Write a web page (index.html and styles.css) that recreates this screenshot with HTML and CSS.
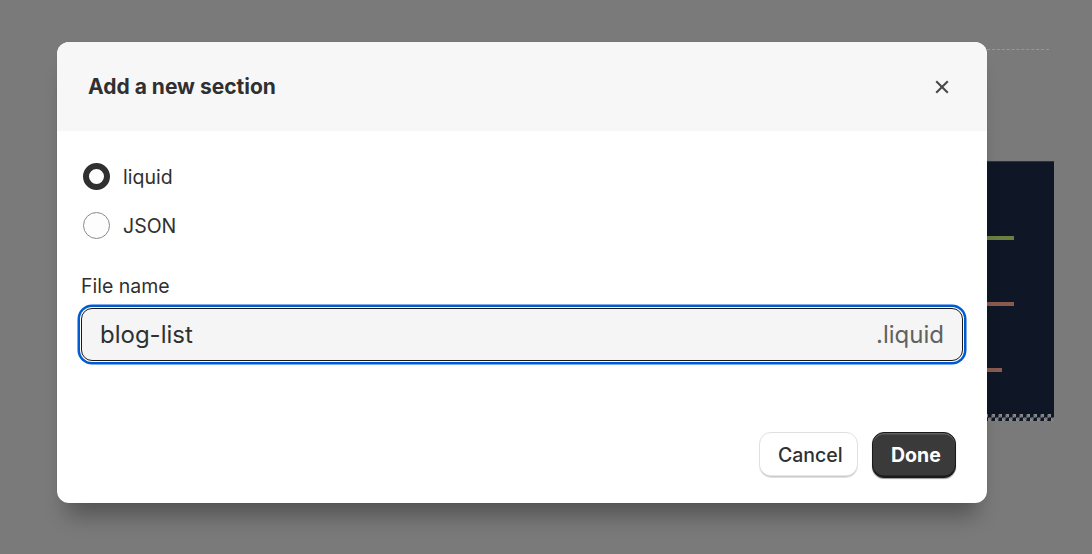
FILE: index.html
```html
<!DOCTYPE html>
<html lang="en">
<head>
<meta charset="utf-8">
<title>Add a new section</title>
<link rel="stylesheet" href="styles.css">
</head>
<body>
<div class="backdrop">
  <div class="dash-line"></div>
  <div class="code-panel">
    <div class="code-line green" style="top:74px;width:27px"></div>
    <div class="code-line red" style="top:140px;width:27px"></div>
    <div class="code-line red" style="top:206px;width:15px"></div>
    <div class="checker"></div>
  </div>
</div>
<div class="overlay">
  <div class="modal">
    <div class="modal-header">
      <h2 class="modal-title">Add a new section</h2>
      <button class="close-btn" aria-label="Close">
        <svg width="14" height="14" viewBox="0 0 14 14"><path d="M1.2 1.2 L12.8 12.8 M12.8 1.2 L1.2 12.8" stroke="#4a4a4a" stroke-width="2.1" stroke-linecap="butt"/></svg>
      </button>
    </div>
    <div class="modal-body">
      <label class="radio-row"><span class="radio checked"></span><span class="radio-label">liquid</span></label>
      <label class="radio-row"><span class="radio"></span><span class="radio-label">JSON</span></label>
      <div class="field-label">File name</div>
      <div class="text-input">
        <span class="input-value">blog-list</span>
        <span class="input-suffix">.liquid</span>
      </div>
    </div>
    <div class="modal-footer">
      <button class="btn btn-secondary">Cancel</button>
      <button class="btn btn-primary">Done</button>
    </div>
  </div>
</div>
</body>
</html>
```
FILE: styles.css
```css
* { box-sizing: border-box; }
html, body { margin: 0; padding: 0; }
body {
  width: 1092px;
  height: 554px;
  overflow: hidden;
  background: #7a7a7a;
  font-family: Inter, "Noto Sans", "Liberation Sans", sans-serif;
  color: #303030;
  position: relative;
}
.backdrop {
  position: absolute;
  inset: 0;
}
.dash-line {
  position: absolute;
  left: 987px;
  top: 49px;
  width: 62px;
  height: 0;
  border-top: 1px dashed #979797;
}
.code-panel {
  position: absolute;
  left: 960px;
  top: 161px;
  width: 94px;
  height: 260px;
  background: #0f1726;
  border-top: 1px solid #2b3340;
}
.code-line {
  position: absolute;
  left: 0;
  height: 4px;
}
.code-line.green { background: #6a7f40; }
.code-line.red { background: #8a5a4e; }
.code-line.green, .code-line.red { margin-left: 27px; }
.checker {
  position: absolute;
  left: 0;
  right: 0;
  bottom: 0;
  height: 7px;
  background-image:
    linear-gradient(45deg, #8a8a8a 25%, transparent 25%, transparent 75%, #8a8a8a 75%),
    linear-gradient(45deg, #8a8a8a 25%, transparent 25%, transparent 75%, #8a8a8a 75%);
  background-size: 7px 7px;
  background-position: 0 0, 3.5px 3.5px;
  background-color: #0f1726;
}
.overlay {
  position: absolute;
  inset: 0;
  padding: 42px 0 0 57px;
}
.modal {
  width: 930px;
  background: #ffffff;
  border-radius: 12px;
  overflow: hidden;
  box-shadow: 0 22px 22px -10px rgba(0, 0, 0, 0.32), 0 0 1px rgba(0,0,0,0.2);
}
.modal-header {
  height: 89px;
  background: #f7f7f7;
  display: flex;
  align-items: center;
  justify-content: space-between;
  padding: 0 31px 0 31px;
}
.modal-title {
  margin: 0;
  font-size: 21px;
  font-weight: 650;
  letter-spacing: 0;
  color: #303030;
}
.close-btn {
  width: 28px;
  height: 28px;
  border: 0;
  background: transparent;
  padding: 0;
  display: flex;
  align-items: center;
  justify-content: center;
  cursor: pointer;
}
.modal-body {
  padding: 32px 24px 0 24px;
}
.radio-row {
  display: flex;
  align-items: center;
  gap: 13px;
  height: 27px;
  margin-bottom: 22px;
  padding-left: 2px;
}
.radio {
  width: 27px;
  height: 27px;
  border-radius: 50%;
  border: 1.3px solid #8a8a8a;
  background: #fdfdfd;
  flex: none;
}
.radio.checked {
  border: 6.5px solid #303030;
  background: #ffffff;
}
.radio-label {
  font-size: 19.5px;
  color: #303030;
}
.field-label {
  margin-top: 35px;
  font-size: 19.5px;
  line-height: 24px;
  color: #303030;
}
.text-input {
  margin-top: 10px;
  height: 53px;
  border: 1px solid #1a1a1a;
  border-radius: 11px;
  background: #f5f5f5;
  box-shadow: 0 0 0 1px #ffffff, 0 0 0 3.5px #005bd3;
  display: flex;
  align-items: center;
  justify-content: space-between;
  padding: 0 18px 0 18px;
}
.input-value {
  font-size: 24px;
  color: #303030;
}
.input-suffix {
  font-size: 24px;
  color: #616161;
}
.modal-footer {
  display: flex;
  justify-content: flex-end;
  gap: 14px;
  padding: 71px 31px 25px;
}
.btn {
  height: 46px;
  border-radius: 12px;
  font-family: Inter, "Noto Sans", "Liberation Sans", sans-serif;
  font-size: 19.5px;
  font-weight: 550;
  padding: 0 18px;
  cursor: pointer;
}
.btn-secondary {
  width: 99px;
  background: #ffffff;
  color: #303030;
  border: 1px solid #e0e0e0;
  box-shadow: inset 0 -1.5px 0 #cccccc;
}
.btn-primary {
  width: 84px;
  background: #3a3a3a;
  color: #ffffff;
  font-weight: 650;
  border: 1px solid #1a1a1a;
  box-shadow: inset 0 1.5px 0 rgba(255,255,255,0.2), inset 0 -1.5px 0 #1a1a1a, 0 1px 1px rgba(0,0,0,0.4);
}
```
